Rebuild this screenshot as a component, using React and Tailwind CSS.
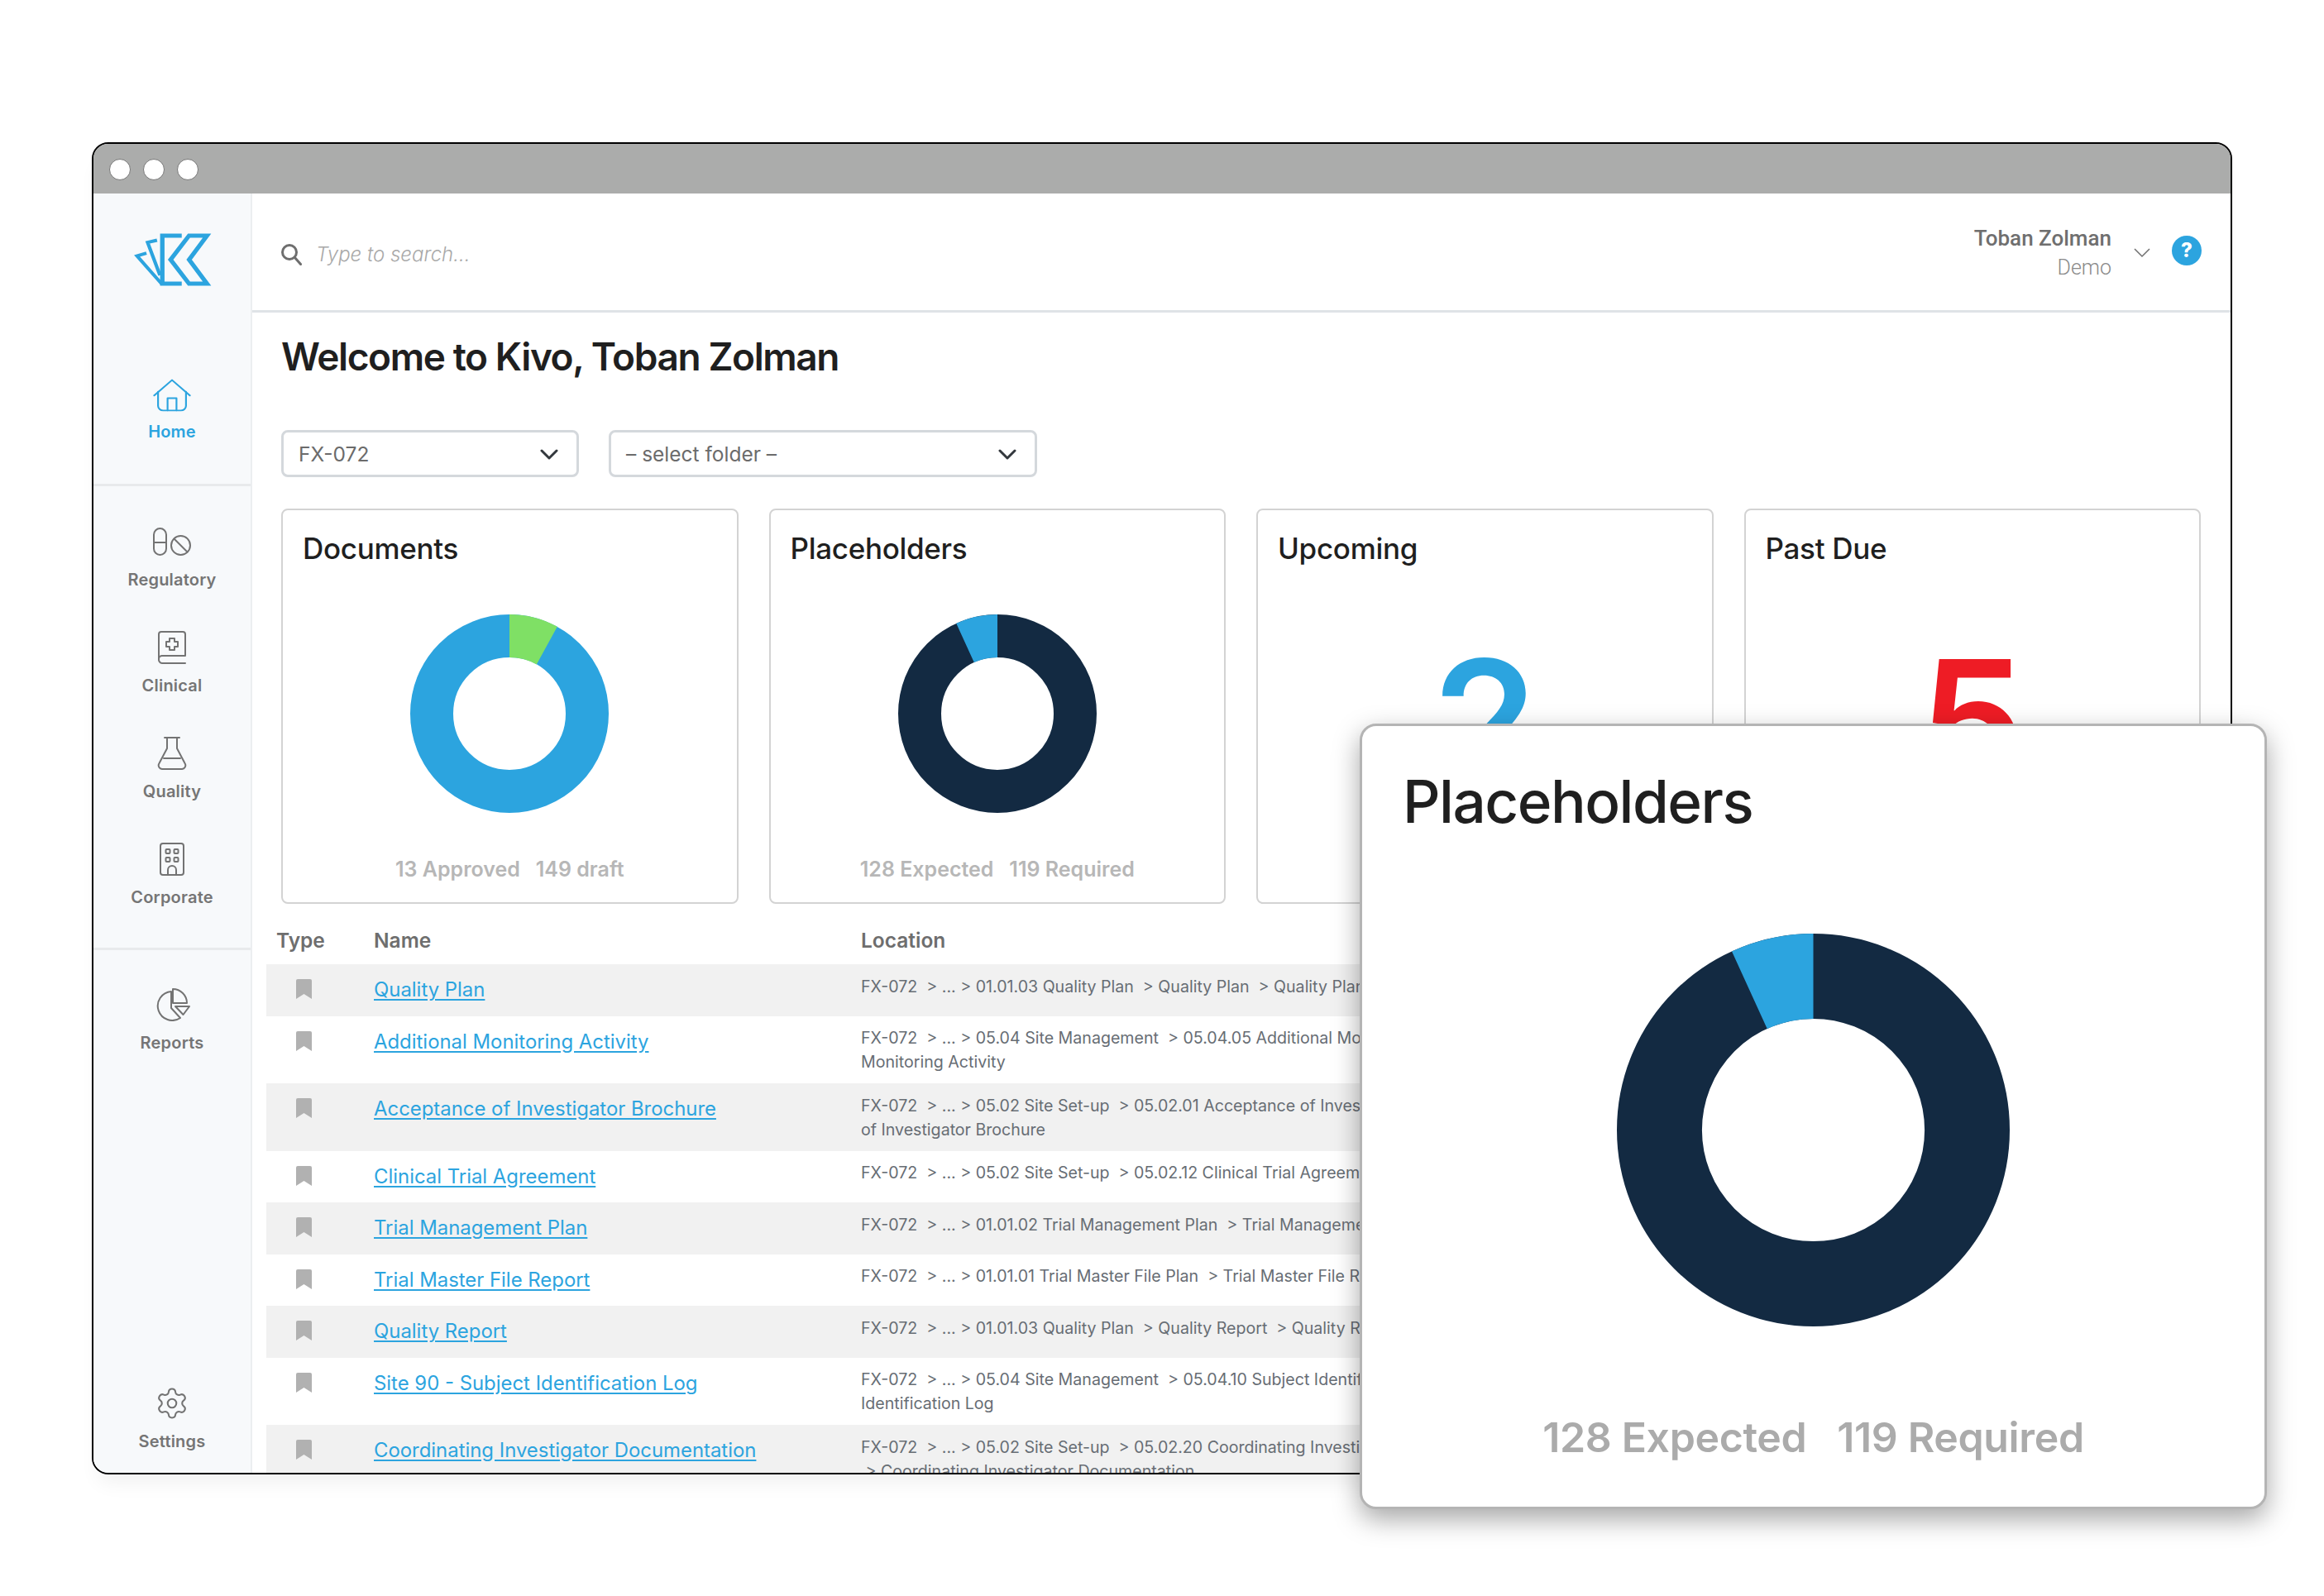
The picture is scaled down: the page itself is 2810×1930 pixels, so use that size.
import React from "react";
import { Settings } from "lucide-react";

const BLUE = "#2ca4df";
const NAVY = "#132a42";
const GREEN = "#7fe065";

function sector(cx, cy, ro, ri, a0, a1) {
  const p = (r, a) => {
    const t = ((a - 90) * Math.PI) / 180;
    return `${(cx + r * Math.cos(t)).toFixed(2)} ${(cy + r * Math.sin(t)).toFixed(2)}`;
  };
  const large = a1 - a0 > 180 ? 1 : 0;
  return `M${p(ro, a0)} A${ro} ${ro} 0 ${large} 1 ${p(ro, a1)} L${p(ri, a1)} A${ri} ${ri} 0 ${large} 0 ${p(ri, a0)} Z`;
}

function Donut({ base, wedge, a0, a1, className }) {
  return (
    <svg viewBox="0 0 240 240" className={className}>
      <circle cx="120" cy="120" r="94" fill="none" stroke={base} strokeWidth="52" />
      <path d={sector(120, 120, 120, 68, a0, a1)} fill={wedge} />
    </svg>
  );
}

const ic = { fill: "none", stroke: "#737373", strokeWidth: 2, strokeLinecap: "round", strokeLinejoin: "round" };

const HomeIcon = () => (
  <svg width="46" height="40" viewBox="238 890 128 122" preserveAspectRatio="none" fill="none" stroke={BLUE} strokeWidth="6" strokeLinecap="round" strokeLinejoin="round">
    <path d="M242 952 L302 895 L362 952" />
    <path d="M255 938 V990 a17 17 0 0 0 17 17 H332 a17 17 0 0 0 17 -17 V938" />
    <path d="M287 1007 V962 H317 V1007" />
  </svg>
);
const RegIcon = () => (
  <svg width="46" height="34" viewBox="0 0 46 34" {...ic}>
    <rect x="1" y="1" width="15" height="32" rx="7.5" />
    <path d="M1 18 H16" />
    <circle cx="33.5" cy="21.5" r="11.5" />
    <path d="M25.5 13.5 L41.5 29.5" />
  </svg>
);
const ClinicalIcon = () => (
  <svg width="34" height="40" viewBox="0 0 34 40" {...ic}>
    <path d="M1 34 V4 a3 3 0 0 1 3 -3 H30 a3 3 0 0 1 3 3 V30 H5 a4 4 0 0 0 -4 4 a4.5 4.5 0 0 0 4 5 H33" />
    <path d="M14 9 h6 v4 h4 v6 h-4 v4 h-6 v-4 h-4 v-6 h4 z" />
  </svg>
);
const FlaskIcon = () => (
  <svg width="36" height="40" viewBox="0 0 36 40" {...ic}>
    <path d="M9 1 H27" />
    <path d="M12 1 V14 L2.5 32 a4.5 4.5 0 0 0 4 7 H29.5 a4.5 4.5 0 0 0 4 -7 L24 14 V1" />
    <path d="M8 26 H28" />
  </svg>
);
const BuildingIcon = () => (
  <svg width="30" height="40" viewBox="0 0 30 40" {...ic}>
    <rect x="1" y="1" width="28" height="38" rx="3" />
    <rect x="7.5" y="8" width="5" height="5" rx="1" />
    <rect x="17.5" y="8" width="5" height="5" rx="1" />
    <rect x="7.5" y="18" width="5" height="5" rx="1" />
    <rect x="17.5" y="18" width="5" height="5" rx="1" />
    <path d="M10 39 V33 a5 5 0 0 1 10 0 V39" />
  </svg>
);
const ReportsIcon = () => (
  <svg width="43" height="40" viewBox="0 0 43 40" {...ic}>
    <path d="M20 4 A17.5 17.5 0 1 0 31 36 L20 24 Z" />
    <path d="M22 1 A17 17 0 0 1 39 18 H22 Z" />
    <path d="M25 22 H42 L34.5 32 Z" />
  </svg>
);
const SearchIcon = () => (
  <svg width="25" height="26" viewBox="0 0 25 26" fill="none" stroke="#6e6e6e" strokeWidth="3" strokeLinecap="round">
    <circle cx="10" cy="10" r="8.5" />
    <path d="M16.5 16.5 L23.5 24.5" />
  </svg>
);
const Chevron = () => (
  <svg width="22" height="13" viewBox="0 0 22 13" fill="none" stroke="#33383d" strokeWidth="3" strokeLinecap="round" strokeLinejoin="round">
    <path d="M2 2 L11 11 L20 2" />
  </svg>
);
const Bookmark = () => (
  <svg width="19" height="24" viewBox="0 0 19 24" fill="#b1b1b1">
    <path d="M0 2 a2 2 0 0 1 2 -2 H17 a2 2 0 0 1 2 2 V24 L9.5 18 L0 24 Z" />
  </svg>
);
const Logo = () => (
  <svg width="96" height="64" viewBox="168 364 270 196" preserveAspectRatio="none" fill="none" stroke={BLUE} strokeWidth="15" strokeLinejoin="miter">
    <path d="M336 373 H270 V551 H336" />
    <path d="M361 373 H422 L361 462 L422 551 H361 L298 462 Z" />
    <path d="M252 390 L220 398 L262 520" strokeWidth="12" />
    <path d="M216 438 L184 448 L268 552" strokeWidth="12" />
  </svg>
);

function NavItem({ icon, label, active, gap = "mt-3" }) {
  return (
    <div className="flex flex-col items-center">
      <div className="h-[44px] flex items-center justify-center">{icon}</div>
      <div className={`${gap} h-6 text-[20px] leading-6 font-semibold tracking-[0.2px] ${active ? "text-[#2ca4df]" : "text-[#757575]"}`}>{label}</div>
    </div>
  );
}

const rows = [
  { name: "Quality Plan", loc: ["FX-072  > ... > 01.01.03 Quality Plan  > Quality Plan  > Quality Plan"] },
  { name: "Additional Monitoring Activity", loc: ["FX-072  > ... > 05.04 Site Management  > 05.04.05 Additional Monitoring Activity", "Monitoring Activity"] },
  { name: "Acceptance of Investigator Brochure", loc: ["FX-072  > ... > 05.02 Site Set-up  > 05.02.01 Acceptance of Investigator Brochure", "of Investigator Brochure"] },
  { name: "Clinical Trial Agreement", loc: ["FX-072  > ... > 05.02 Site Set-up  > 05.02.12 Clinical Trial Agreement"] },
  { name: "Trial Management Plan", loc: ["FX-072  > ... > 01.01.02 Trial Management Plan  > Trial Management Plan"] },
  { name: "Trial Master File Report", loc: ["FX-072  > ... > 01.01.01 Trial Master File Plan  > Trial Master File Report"] },
  { name: "Quality Report", loc: ["FX-072  > ... > 01.01.03 Quality Plan  > Quality Report  > Quality Report"] },
  { name: "Site 90 - Subject Identification Log", loc: ["FX-072  > ... > 05.04 Site Management  > 05.04.10 Subject Identification Log", "Identification Log"] },
  { name: "Coordinating Investigator Documentation", loc: ["FX-072  > ... > 05.02 Site Set-up  > 05.02.20 Coordinating Investigator Documentation", " > Coordinating Investigator Documentation"] },
];

function Card({ title, children }) {
  return (
    <div className="h-[478px] rounded-lg border-2 border-[#d3d3d3] px-[25px] pt-[25px] flex flex-col">
      <div className="-ml-px text-[35px] leading-[42px] font-medium text-[#1f1f1f] tracking-[-0.3px]">{title}</div>
      {children}
    </div>
  );
}

function DonutBody({ base, wedge, a0, a1, foot }) {
  return (
    <>
      <Donut base={base} wedge={wedge} a0={a0} a1={a1} className="mt-[59px] w-[240px] h-[240px] self-center" />
      <div className="mt-[52px] text-center text-[25px] leading-8 font-semibold text-[#b7b7b7] whitespace-pre">{foot}</div>
    </>
  );
}

function BigNum({ value, color }) {
  return <div className={`mt-[85px] text-center text-[205px] leading-none font-semibold ${color}`}>{value}</div>;
}

export default function App() {
  return (
    <div className="relative w-[2810px] h-[1930px] overflow-hidden bg-white font-['Inter',sans-serif] pl-[111px] pt-[172px]">
      <div className="w-[2588px] h-[1611px] rounded-[20px] border-2 border-black overflow-hidden flex flex-col bg-white shadow-[0_18px_24px_-8px_rgba(0,0,0,0.06)]">
        <div className="h-[60px] shrink-0 bg-[#abacab] flex items-center gap-[15px] pl-[19px] pt-[2px]">
          <div className="w-[26px] h-[26px] rounded-full bg-white border border-[#777]" />
          <div className="w-[26px] h-[26px] rounded-full bg-white border border-[#777]" />
          <div className="w-[26px] h-[26px] rounded-full bg-white border border-[#777]" />
        </div>
        <div className="flex-1 flex min-h-0">
          <aside className="w-[192px] shrink-0 bg-[#f7f9fb] border-r-2 border-[#eceef0] flex flex-col">
            <div className="pt-[48px] mb-[110px] flex justify-center"><Logo /></div>
            <NavItem icon={<HomeIcon />} label="Home" active gap="mt-[10px]" />
            <div className="mt-[51px] h-[3px] bg-[#e8eaec]" />
            <div className="pt-[45px] pb-[49px] flex flex-col gap-[48px]">
              <NavItem icon={<RegIcon />} label="Regulatory" />
              <NavItem icon={<ClinicalIcon />} label="Clinical" />
              <NavItem icon={<FlaskIcon />} label="Quality" />
              <NavItem icon={<BuildingIcon />} label="Corporate" />
            </div>
            <div className="h-[3px] bg-[#e8eaec]" />
            <div className="pt-[44px]">
              <NavItem icon={<ReportsIcon />} label="Reports" />
            </div>
            <div className="mt-auto pb-[26px]">
              <NavItem icon={<Settings size={42} color="#737373" strokeWidth={1.2} />} label="Settings" />
            </div>
          </aside>
          <main className="flex-1 min-w-0 flex flex-col overflow-hidden">
            <header className="h-[144px] shrink-0 border-b-[3px] border-[#dfe3e7] flex pl-[35px] pr-[35px]">
              <div className="flex items-center gap-[17px] pt-[7px]">
                <SearchIcon />
                <span className="text-[24px] italic font-light text-[#a9a9a9]">Type to search...</span>
              </div>
              <div className="ml-auto flex items-start">
                <div className="text-right font-['Roboto',sans-serif] mt-[38px]">
                  <div className="text-[26px] leading-8 font-medium text-[#6f6f6f]">Toban Zolman</div>
                  <div className="mt-[4px] text-[25px] leading-8 font-light text-[#8a8a8a]">Demo</div>
                </div>
                <svg width="20" height="12" viewBox="0 0 20 12" fill="none" stroke="#6f6f6f" strokeWidth="1.5" className="ml-[27px] mt-[66px]">
                  <path d="M1 1 L10 10 L19 1" />
                </svg>
                <div className="ml-[26px] mt-[51px] w-9 h-9 rounded-full bg-[#2ca4df] flex items-center justify-center text-white text-[24px] font-extrabold leading-none">?</div>
              </div>
            </header>
            <div className="flex-1 min-h-0 pl-[35px] pr-[36px] flex flex-col">
              <h1 className="mt-[25px] h-14 text-[46px] leading-[56px] font-semibold tracking-[-1.4px] text-[#1f1f1f] whitespace-nowrap">Welcome to Kivo, Toban Zolman</h1>
              <div className="mt-[61px] flex gap-[36px]">
                <div className="w-[360px] h-[57px] rounded-lg border-[3px] border-[#d4d8dc] flex items-center justify-between pl-[18px] pr-[22px] pt-[2px] text-[24.5px] text-[#6b6b6b]">
                  <span>FX-072</span><Chevron />
                </div>
                <div className="w-[518px] h-[57px] rounded-lg border-[3px] border-[#d4d8dc] flex items-center justify-between pl-[18px] pr-[22px] pt-[2px] text-[24.5px] text-[#6b6b6b]">
                  <span>– select folder –</span><Chevron />
                </div>
              </div>
              <div className="mt-[38px] grid grid-cols-4 gap-[37px]">
                <Card title="Documents">
                  <DonutBody base={BLUE} wedge={GREEN} a0={0} a1={28.8} foot="13 Approved   149 draft" />
                </Card>
                <Card title="Placeholders">
                  <DonutBody base={NAVY} wedge={BLUE} a0={-24.5} a1={0} foot="128 Expected   119 Required" />
                </Card>
                <Card title="Upcoming"><BigNum value="2" color="text-[#2ca4df]" /></Card>
                <Card title="Past Due"><BigNum value="5" color="text-[#ee1c25]" /></Card>
              </div>
              <div className="mt-[19px] -ml-[18px] -mr-[18px] flex-1 min-h-0">
                <div className="h-[50px] mb-[4px] grid grid-cols-[130px_589px_1fr] items-center text-[24.5px] font-semibold text-[#6e6e6e]">
                  <div className="pl-3">Type</div>
                  <div>Name</div>
                  <div>Location</div>
                </div>
                {rows.map((r, i) => (
                  <div key={r.name} className={`grid grid-cols-[130px_589px_1fr] ${i % 2 === 0 ? "bg-[#f1f1f1]" : "bg-white"}`}>
                    <div className="pl-[36px] pt-[18px]"><Bookmark /></div>
                    <div className="pt-[15px] pb-[15.5px]">
                      <a className="text-[23.9px] leading-8 text-[#2ca4df] underline underline-offset-[3px] whitespace-nowrap">{r.name}</a>
                    </div>
                    <div className="pt-[12.5px] pb-[11px] text-[19.6px] leading-[29px] text-[#676d74] whitespace-pre overflow-hidden">
                      {r.loc.map((l) => <div key={l}>{l}</div>)}
                    </div>
                  </div>
                ))}
              </div>
            </div>
          </main>
        </div>
      </div>

      <div className="absolute left-[1644px] top-[875px] w-[1097px] h-[950px] rounded-[20px] border-[3px] border-[#b4b4b4] bg-white shadow-[0_12px_32px_rgba(0,0,0,0.35)] flex flex-col pt-[49px] pl-[49px]">
        <div className="text-[71px] leading-[84px] font-medium text-[#1f1f1f] tracking-[-1.5px]">Placeholders</div>
        <Donut base={NAVY} wedge={BLUE} a0={-24.5} a1={0} className="mt-[118px] -ml-[49px] w-[475px] h-[475px] self-center" />
        <div className="mt-[104px] -ml-[49px] text-center text-[50px] leading-[60px] font-semibold tracking-[-0.35px] text-[#ababab] whitespace-pre">128 Expected   119 Required</div>
      </div>
    </div>
  );
}
